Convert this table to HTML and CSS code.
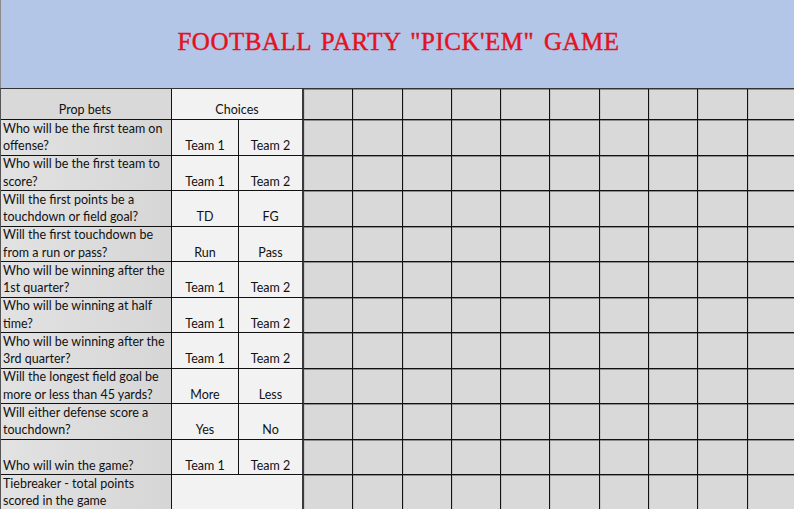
FILE: index.html
```html
<!DOCTYPE html>
<html>
<head>
<meta charset="utf-8">
<link rel="stylesheet" href="styles.css">
</head>
<body>
<header class="banner">
  <h1 class="title">Football Party "Pick'em" Game</h1>
</header>
<div class="sheet">
  <div class="cell prop head">Prop bets</div>
  <div class="cell choice head span2 last">Choices</div>
  <div class="cell g"></div><div class="cell g"></div><div class="cell g"></div><div class="cell g"></div><div class="cell g"></div><div class="cell g"></div><div class="cell g"></div><div class="cell g"></div><div class="cell g"></div><div class="cell g"></div>

  <div class="cell prop">Who will be the first team on offense?</div>
  <div class="cell choice">Team 1</div><div class="cell choice last">Team 2</div>
  <div class="cell g"></div><div class="cell g"></div><div class="cell g"></div><div class="cell g"></div><div class="cell g"></div><div class="cell g"></div><div class="cell g"></div><div class="cell g"></div><div class="cell g"></div><div class="cell g"></div>

  <div class="cell prop">Who will be the first team to score?</div>
  <div class="cell choice">Team 1</div><div class="cell choice last">Team 2</div>
  <div class="cell g"></div><div class="cell g"></div><div class="cell g"></div><div class="cell g"></div><div class="cell g"></div><div class="cell g"></div><div class="cell g"></div><div class="cell g"></div><div class="cell g"></div><div class="cell g"></div>

  <div class="cell prop">Will the first points be a touchdown or field goal?</div>
  <div class="cell choice">TD</div><div class="cell choice last">FG</div>
  <div class="cell g"></div><div class="cell g"></div><div class="cell g"></div><div class="cell g"></div><div class="cell g"></div><div class="cell g"></div><div class="cell g"></div><div class="cell g"></div><div class="cell g"></div><div class="cell g"></div>

  <div class="cell prop">Will the first touchdown be from a run or pass?</div>
  <div class="cell choice">Run</div><div class="cell choice last">Pass</div>
  <div class="cell g"></div><div class="cell g"></div><div class="cell g"></div><div class="cell g"></div><div class="cell g"></div><div class="cell g"></div><div class="cell g"></div><div class="cell g"></div><div class="cell g"></div><div class="cell g"></div>

  <div class="cell prop">Who will be winning after the 1st quarter?</div>
  <div class="cell choice">Team 1</div><div class="cell choice last">Team 2</div>
  <div class="cell g"></div><div class="cell g"></div><div class="cell g"></div><div class="cell g"></div><div class="cell g"></div><div class="cell g"></div><div class="cell g"></div><div class="cell g"></div><div class="cell g"></div><div class="cell g"></div>

  <div class="cell prop">Who will be winning at half time?</div>
  <div class="cell choice">Team 1</div><div class="cell choice last">Team 2</div>
  <div class="cell g"></div><div class="cell g"></div><div class="cell g"></div><div class="cell g"></div><div class="cell g"></div><div class="cell g"></div><div class="cell g"></div><div class="cell g"></div><div class="cell g"></div><div class="cell g"></div>

  <div class="cell prop">Who will be winning after the 3rd quarter?</div>
  <div class="cell choice">Team 1</div><div class="cell choice last">Team 2</div>
  <div class="cell g"></div><div class="cell g"></div><div class="cell g"></div><div class="cell g"></div><div class="cell g"></div><div class="cell g"></div><div class="cell g"></div><div class="cell g"></div><div class="cell g"></div><div class="cell g"></div>

  <div class="cell prop">Will the longest field goal be more or less than 45 yards?</div>
  <div class="cell choice">More</div><div class="cell choice last">Less</div>
  <div class="cell g"></div><div class="cell g"></div><div class="cell g"></div><div class="cell g"></div><div class="cell g"></div><div class="cell g"></div><div class="cell g"></div><div class="cell g"></div><div class="cell g"></div><div class="cell g"></div>

  <div class="cell prop">Will either defense score a touchdown?</div>
  <div class="cell choice">Yes</div><div class="cell choice last">No</div>
  <div class="cell g"></div><div class="cell g"></div><div class="cell g"></div><div class="cell g"></div><div class="cell g"></div><div class="cell g"></div><div class="cell g"></div><div class="cell g"></div><div class="cell g"></div><div class="cell g"></div>

  <div class="cell prop">Who will win the game?</div>
  <div class="cell choice">Team 1</div><div class="cell choice last">Team 2</div>
  <div class="cell g"></div><div class="cell g"></div><div class="cell g"></div><div class="cell g"></div><div class="cell g"></div><div class="cell g"></div><div class="cell g"></div><div class="cell g"></div><div class="cell g"></div><div class="cell g"></div>

  <div class="cell prop">Tiebreaker - total points scored in the game</div>
  <div class="cell choice span2 last"></div>
  <div class="cell g"></div><div class="cell g"></div><div class="cell g"></div><div class="cell g"></div><div class="cell g"></div><div class="cell g"></div><div class="cell g"></div><div class="cell g"></div><div class="cell g"></div><div class="cell g"></div>
</div>
</body>
</html>
```

FILE: styles.css
```css
* { box-sizing: border-box; }
html, body {
  margin: 0;
  padding: 0;
  width: 794px;
  height: 509px;
  overflow: hidden;
  background: #ffffff;
}
.banner {
  height: 88px;
  background: #b4c6e7;
  border-left: 1px solid #8a8a8a;
  display: flex;
  align-items: center;
  justify-content: center;
}
.title {
  margin: 0;
  padding: 0 0 4px 2px;
  font-family: "Liberation Serif", "DejaVu Serif", serif;
  font-weight: normal;
  font-size: 25px;
  text-transform: uppercase;
  letter-spacing: 0.5px;
  word-spacing: 3px;
  color: #e3121e;
  -webkit-text-stroke: 0.45px #e3121e;
}
.sheet {
  display: grid;
  grid-template-columns: 171px 67px 65px repeat(10, 49.3px);
  grid-template-rows: 31px repeat(11, 35.5px);
  width: 800px;
  border-top: 1px solid #333;
  border-left: 1px solid #555;
  font-family: "Lato", "Liberation Sans", sans-serif;
  font-size: 12.5px;
  color: #111;
}
.cell {
  border-right: 1px solid #111;
  border-bottom: 1px solid #111;
  display: flex;
  align-items: flex-end;
  line-height: 17.5px;
  overflow: hidden;
}
.prop {
  background: linear-gradient(to right, #e2e2e2, #d6d6d6);
  padding: 0 4px 0 2px;
}
.prop.head {
  background: #d9d9d9;
  justify-content: center;
  padding-bottom: 1px;
}
.choice {
  background: #f2f2f2;
  justify-content: center;
}
.choice.last { border-right: 2px solid #3a3a3a; }
.choice.head { padding-bottom: 1px; }
.span2 { grid-column: span 2; }
.g {
  background: #d9d9d9;
  border-bottom: 1px solid #111;
  box-shadow: inset 0 1px 0 #8c8c8c, inset 1px 0 0 #c4c4c4;
}
```
